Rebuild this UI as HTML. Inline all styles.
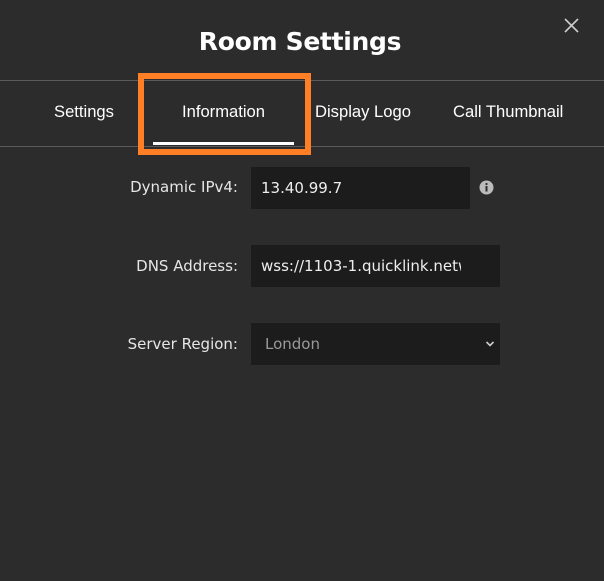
<!DOCTYPE html>
<html><head><style>
html,body{margin:0;padding:0;width:604px;height:581px;background:#2c2c2c;overflow:hidden;font-family:"Liberation Sans",sans-serif;color:#fff}
.abs{position:absolute}
.title{left:0;width:600px;top:27px;text-align:center;font-size:25px;font-weight:bold;font-family:"DejaVu Sans",sans-serif;letter-spacing:-0.3px}
.line{left:0;width:604px;height:1px;background:#5a5a5a}
.tab{top:102px;font-size:16.6px}
.lbl{font-family:"DejaVu Sans",sans-serif;font-size:15px;color:#e6e6e6;text-align:right;width:130px;left:108px}
.inp{background:#1c1c1c;left:251px;height:42px;font-family:"DejaVu Sans",sans-serif;font-size:15px;color:#eee;line-height:42px;padding-left:10px;box-sizing:border-box;overflow:hidden;white-space:nowrap}
</style></head><body>
<div class="abs title">Room Settings</div>
<svg class="abs" style="left:563px;top:17px" width="17" height="17"><path d="M2 2L15 15M15 2L2 15" stroke="#ccc" stroke-width="1.6"/></svg>
<div class="abs line" style="top:80px"></div>
<div class="abs line" style="top:146px"></div>
<div class="abs tab" style="left:54px">Settings</div>
<div class="abs tab" style="left:182px">Information</div>
<div class="abs tab" style="left:315px">Display Logo</div>
<div class="abs tab" style="left:453px">Call Thumbnail</div>
<div class="abs" style="left:153px;top:142px;width:141px;height:3px;background:#fff"></div>
<div class="abs" style="left:138px;top:73px;width:161px;height:70px;border:6px solid #ff7f27"></div>
<div class="abs lbl" style="top:178px">Dynamic IPv4:</div>
<div class="abs inp" style="top:167px;width:219px">13.40.99.7</div>
<svg class="abs" style="left:479px;top:180px" width="15" height="15"><circle cx="7.5" cy="7.5" r="7" fill="#bbb"/><rect x="6.5" y="6" width="2" height="5.5" fill="#2c2c2c"/><circle cx="7.5" cy="4" r="1.1" fill="#2c2c2c"/></svg>
<div class="abs lbl" style="top:257px">DNS Address:</div>
<div class="abs inp" style="top:245px;width:249px"><div style="width:200px;overflow:hidden">wss://1103-1.quicklink.network</div></div>
<div class="abs lbl" style="top:335px">Server Region:</div>
<div class="abs inp" style="top:323px;width:249px;color:#999;padding-left:14px">London</div>
<svg class="abs" style="left:485px;top:340px" width="10" height="8"><path d="M1.5 2L5 5.5L8.5 2" stroke="#ccc" stroke-width="1.6" fill="none"/></svg>
</body></html>
